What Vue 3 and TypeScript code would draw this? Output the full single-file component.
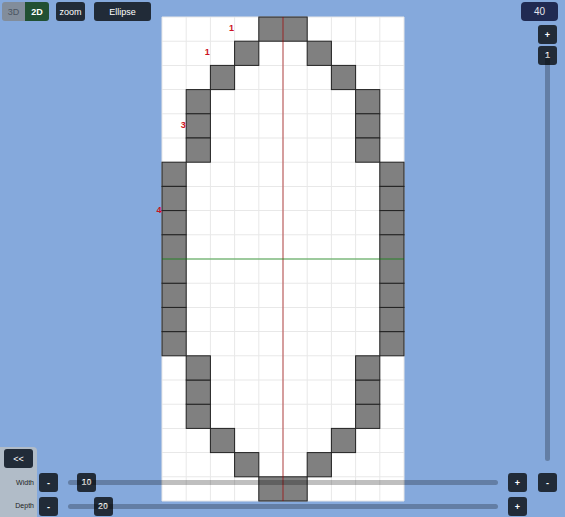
<script setup lang="ts">
import { computed, ref } from 'vue'

const MAX = 256
const CELL = 24

const mode = ref<'3D' | '2D'>('2D')
const panelOpen = ref(true)
const width = ref(10)
const depth = ref(20)
const layer = ref(1)

interface Cell { x: number; y: number; w: number; h: number }
interface Mark { x: number; y: number; n: number }

// Filled column of each row in the upper left quarter.
const quarter: number[] = [4, 3, 2, 1, 1, 1, 0, 0, 0, 0]

// Mirrors the quarter on both axes; cells that touch an axis join their mirror image.
const cells = computed<Cell[]>(() => {
  const out: Cell[] = []
  quarter.forEach((col, row) => {
    const w = col === 4 ? 2 : 1
    const h = row === 9 ? 2 : 1
    const xs = w === 2 ? [col] : [col, 9 - col]
    const ys = h === 2 ? [row] : [row, 19 - row]
    for (const x of xs) {
      for (const y of ys) out.push({ x: x * CELL, y: y * CELL, w: w * CELL, h: h * CELL })
    }
  })
  return out
})

const marks: Mark[] = [
  { x: 3, y: 0.5, n: 1 },
  { x: 2, y: 1.5, n: 1 },
  { x: 1, y: 4.5, n: 3 },
  { x: 0, y: 8, n: 4 },
]

const fraction = (v: number): number => (v - 1) / (MAX - 1)
const clamp = (v: number): number => Math.min(MAX, Math.max(1, v))
</script>

<template>
  <main class="app">
    <div class="stage">
      <svg class="drawing" viewBox="0 0 240 480" role="img" aria-label="Ellipse">
        <rect class="paper" width="240" height="480" />
        <line v-for="i in 11" :key="'v' + i" class="grid" :x1="(i - 1) * CELL" :x2="(i - 1) * CELL" y1="0" y2="480" />
        <line v-for="i in 21" :key="'h' + i" class="grid" :y1="(i - 1) * CELL" :y2="(i - 1) * CELL" x1="0" x2="240" />
        <rect v-for="c in cells" :key="c.x + '-' + c.y" class="cell" :x="c.x" :y="c.y" :width="c.w" :height="c.h" />
        <line class="axis-y" x1="120" x2="120" y1="0" y2="480" />
        <line class="axis-x" x1="0" x2="240" y1="240" y2="240" />
        <text v-for="m in marks" :key="m.y" class="mark" :x="m.x * CELL - 3" :y="m.y * CELL + 2">{{ m.n }}</text>
      </svg>
    </div>

    <div class="hud">
      <header class="top">
        <div class="toggle">
          <button type="button" :class="{ active: mode === '3D' }" @click="mode = '3D'">3D</button>
          <button type="button" :class="{ active: mode === '2D' }" @click="mode = '2D'">2D</button>
        </div>
        <button type="button" class="btn zoom">zoom</button>
        <button type="button" class="btn shape">Ellipse</button>
        <output class="count">40</output>
      </header>

      <div class="side">
        <button type="button" class="btn step" @click="layer = clamp(layer - 1)">+</button>
        <div class="slider vertical">
          <output class="thumb" :style="{ '--p': fraction(layer) }">{{ layer }}</output>
          <input v-model.number="layer" type="range" min="1" :max="MAX" aria-label="Layer" />
        </div>
      </div>

      <div class="bottom">
        <div class="panel">
          <button type="button" class="btn fold" @click="panelOpen = !panelOpen">&lt;&lt;</button>
          <label for="width">Width</label>
          <label for="depth">Depth</label>
        </div>
        <div class="rows">
          <div class="row">
            <button type="button" class="btn step" @click="width = clamp(width - 1)">-</button>
            <div class="slider">
              <output class="thumb" :style="{ '--p': fraction(width) }">{{ width }}</output>
              <input id="width" v-model.number="width" type="range" min="1" :max="MAX" />
            </div>
            <button type="button" class="btn step" @click="width = clamp(width + 1)">+</button>
            <button type="button" class="btn step last" @click="layer = clamp(layer + 1)">-</button>
          </div>
          <div class="row">
            <button type="button" class="btn step" @click="depth = clamp(depth - 1)">-</button>
            <div class="slider">
              <output class="thumb" :style="{ '--p': fraction(depth) }">{{ depth }}</output>
              <input id="depth" v-model.number="depth" type="range" min="1" :max="MAX" />
            </div>
            <button type="button" class="btn step deep" @click="depth = clamp(depth + 1)">+</button>
          </div>
        </div>
      </div>
    </div>
  </main>
</template>

<style>
body {
  background: #85a9dc;
}
</style>

<style scoped>
.app {
  display: grid;
  grid-template: 100vh / 1fr;
  overflow: hidden;
  background: #85a9dc;
  font-family: "Liberation Sans", Arial, sans-serif;
}

.stage,
.hud {
  grid-area: 1 / 1;
  min-width: 0;
  min-height: 0;
}

.stage {
  display: flex;
  justify-content: center;
  padding: 17px 0 16px 1px;
}

.drawing {
  height: 100%;
  overflow: visible;
}

.paper { fill: #fff; }
.grid { stroke: #e8e8e8; stroke-width: 1; }
.cell { fill: #808080; stroke: #222; stroke-width: 1; }
.axis-y { stroke: #a00000; stroke-opacity: 0.7; stroke-width: 1; }
.axis-x { stroke: #008000; stroke-opacity: 0.7; stroke-width: 1; }
.mark { fill: #cc1122; font-size: 9px; font-weight: 700; text-anchor: middle; }

.hud {
  position: relative;
  display: flex;
  flex-direction: column;
}

button {
  margin: 0;
  padding: 0;
  border: 0;
  font-family: inherit;
  cursor: pointer;
}

.top {
  display: flex;
  padding: 2px 7px 0 2px;
}

.toggle {
  display: flex;
  border-radius: 3px;
  overflow: hidden;
}

.toggle button {
  width: 23px;
  height: 19px;
  background: #828d9b;
  color: #4b5562;
  font-size: 9px;
}

.toggle .active {
  width: 24px;
  background: #215032;
  color: #fff;
  font-weight: 700;
}

.btn {
  flex: none;
  height: 19px;
  border-radius: 3px;
  background: #212b38;
  color: #fff;
  font-size: 9px;
}

.zoom { width: 29px; margin-left: 7px; }
.shape { width: 57px; margin-left: 9px; }

.count {
  width: 37px;
  margin-left: auto;
  border-radius: 4px;
  background: #202a52;
  color: #e4e6ee;
  font-size: 10px;
  line-height: 19px;
  text-align: center;
}

.side {
  flex: 1;
  min-height: 0;
  display: flex;
  flex-direction: column;
  align-items: center;
  align-self: flex-end;
  gap: 9px;
  padding: 4px 8px 0 0;
}

.step {
  width: 19px;
  font-weight: 700;
}

.slider {
  position: relative;
  flex: 1;
  display: flex;
  align-items: center;
  height: 19px;
}

.slider input {
  position: relative;
  appearance: none;
  width: 100%;
  height: 5px;
  margin: 0;
  border-radius: 3px;
  background: rgba(0, 0, 0, 0.25);
  cursor: pointer;
}

.slider input::-webkit-slider-thumb {
  appearance: none;
  width: 6px;
  height: 6px;
  background: transparent;
}

.thumb {
  position: absolute;
  left: calc(3px + (100% - 6px) * var(--p));
  top: 0;
  width: 19px;
  margin-left: -9px;
  border-radius: 3px;
  background: #212b38;
  color: #fff;
  font-size: 9px;
  font-weight: 700;
  line-height: 19px;
  text-align: center;
}

.vertical {
  width: 19px;
  height: auto;
  min-height: 0;
  justify-content: center;
}

.vertical input {
  writing-mode: vertical-lr;
  width: 5px;
  height: 100%;
}

.vertical .thumb {
  left: 0;
  top: calc(3px + (100% - 6px) * var(--p));
  margin: -10px 0 0;
}

.bottom {
  display: flex;
  align-items: flex-end;
  margin-top: -14px;
}

.panel {
  display: flex;
  flex-direction: column;
  align-items: flex-end;
  width: 37px;
  padding: 2px 0 0;
  border-radius: 0 4px 0 0;
  background: #b1bcc8;
}

.fold {
  width: 29px;
  margin: 0 4px 3px;
}

.panel label {
  padding-right: 3px;
  color: #222;
  font-size: 7px;
  line-height: 23px;
}

.rows {
  flex: 1;
  display: flex;
  flex-direction: column;
  gap: 5px;
  padding: 0 8px 1px 2px;
}

.row {
  display: flex;
  gap: 10px;
}

.last { margin-left: 1px; }
.deep { margin-right: 30px; }
</style>
